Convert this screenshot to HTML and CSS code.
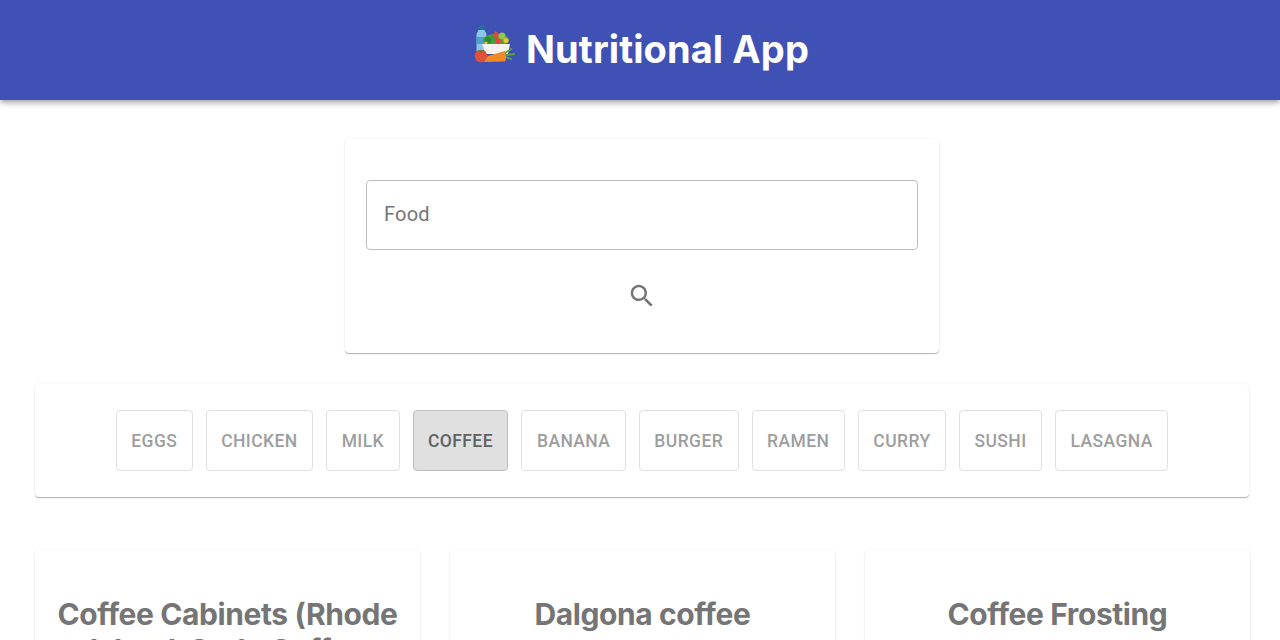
FILE: index.html
```html
<!DOCTYPE html>
<html lang="en">
<head>
    <meta charset="UTF-8">
    <meta name="viewport" content="width=device-width, initial-scale=1.0">
    <title>Nutritional App</title>
    <link rel="stylesheet" href="styles.css">
</head>
<body>
<header class="app-bar">
    <svg class="logo" width="42" height="38" viewBox="0 0 42 38" aria-hidden="true">
        <!-- bottle -->
        <rect x="4.5" y="0" width="6" height="5" rx="1" fill="#256f9e"/>
        <path d="M2.5 9 L4.5 5 H10.5 L12.5 9 V26 H2.5 Z" fill="#8cc6e6"/>
        <rect x="2.5" y="12" width="10" height="7" fill="#4d9fd0"/>
        <!-- salad -->
        <ellipse cx="22" cy="15" rx="13" ry="6" fill="#4da23c"/>
        <circle cx="14" cy="15" r="3.5" fill="#2f8a35"/>
        <circle cx="20" cy="12" r="3.5" fill="#3f9b3a"/>
        <path d="M19.5 9 L21.5 6 L25 9 L24 12 H20 Z" fill="#e2483d"/>
        <circle cx="28" cy="11" r="3.5" fill="#8cc84b"/>
        <circle cx="32" cy="15.5" r="2.5" fill="#f2c230"/>
        <circle cx="24" cy="16" r="3" fill="#e2483d"/>
        <circle cx="12" cy="18" r="1.5" fill="#f2c230"/>
        <!-- bowl -->
        <path d="M8 19 H36 L34 29 H12 Z" fill="#f5f3ee"/>
        <!-- tomato -->
        <circle cx="7" cy="31" r="6.3" fill="#e0503a"/>
        <path d="M3 25.5 H11 L7 27.5 Z" fill="#3c8f3a"/>
        <!-- carrot -->
        <path d="M10 37 L14 31 L31 26 Q33.5 31 31 36.5 Z" fill="#f08a24"/>
        <path d="M31 28 L38 23.5 M32.5 30 L41 29 M32 32 L38 34.5" stroke="#5aa63c" stroke-width="1.8" fill="none"/>
    </svg>
    <h1 class="app-title">Nutritional App</h1>
</header>

<main class="content">
    <section class="card search-card">
        <div class="food-field">Food</div>
        <button class="search-btn" aria-label="search">
            <svg width="30" height="30" viewBox="0 0 24 24" fill="#757575"><path d="M15.5 14h-.79l-.28-.27C15.41 12.59 16 11.11 16 9.5 16 5.91 13.09 3 9.5 3S3 5.91 3 9.5 5.91 16 9.5 16c1.61 0 3.09-.59 4.23-1.57l.27.28v.79l5 4.99L20.49 19l-4.99-5zm-6 0C7.01 14 5 11.99 5 9.5S7.01 5 9.5 5 14 7.01 14 9.5 11.99 14 9.5 14z"/></svg>
        </button>
    </section>

    <section class="card chips-card">
        <button class="chip">Eggs</button>
        <button class="chip">Chicken</button>
        <button class="chip">Milk</button>
        <button class="chip selected">Coffee</button>
        <button class="chip">Banana</button>
        <button class="chip">Burger</button>
        <button class="chip">Ramen</button>
        <button class="chip">Curry</button>
        <button class="chip">Sushi</button>
        <button class="chip">Lasagna</button>
    </section>

    <section class="results">
        <article class="card result-card"><h2>Coffee Cabinets (Rhode Island-Style Coffee Milkshakes)</h2></article>
        <article class="card result-card"><h2>Dalgona coffee</h2></article>
        <article class="card result-card"><h2>Coffee Frosting</h2></article>
    </section>
</main>
</body>
</html>
```

FILE: styles.css
```css
html, body {
    height: 640px;
    overflow: hidden;
}
body {
    margin: 0;
    background-color: #fff;
    font-family: Roboto, Arial, sans-serif;
}
.app-bar {
    box-sizing: border-box;
    height: 100px;
    padding-left: 3px;
    display: flex;
    align-items: center;
    justify-content: center;
    gap: 10px;
    background-color: #3f51b5;
    box-shadow: 0 2px 4px -1px rgba(0, 0, 0, 0.2), 0 4px 5px 0 rgba(0, 0, 0, 0.14), 0 1px 10px 0 rgba(0, 0, 0, 0.12);
}
.logo {
    margin-bottom: 12px;
}
.app-title {
    margin: 0 0 2px;
    color: #fff;
    font-family: Inter, sans-serif;
    font-size: 38px;
    font-weight: 700;
    letter-spacing: 0.1px;
}
.content {
    padding: 39px 31px 0 35px;
}
.card {
    background-color: #fff;
    border-radius: 4px;
    box-shadow: 0 1px 1px rgba(0, 0, 0, 0.3), 0 0 3px rgba(0, 0, 0, 0.06);
}
.search-card {
    box-sizing: border-box;
    width: 594px;
    height: 214px;
    margin: 0 auto 31px;
    padding: 41px 21px 0 21px;
}
.food-field {
    box-sizing: border-box;
    height: 70px;
    padding: 0 17px 2px;
    display: flex;
    align-items: center;
    border: 1px solid #bdbdbd;
    border-radius: 4px;
    color: #757575;
    font-size: 20px;
    letter-spacing: 0.2px;
}
.search-btn {
    display: block;
    margin: 31px auto 0;
    padding: 0;
    border: 0;
    background: none;
    width: 30px;
    height: 30px;
}
.chips-card {
    height: 113px;
    box-sizing: border-box;
    display: flex;
    justify-content: center;
    gap: 13px;
    padding-top: 26px;
    margin-bottom: 53px;
}
.chip {
    height: 61px;
    padding: 0 14.5px;
    border: 1px solid #e0e0e0;
    border-radius: 4px;
    background-color: #fff;
    color: #9e9e9e;
    font-family: Roboto, Arial, sans-serif;
    font-size: 17.5px;
    font-weight: 500;
    letter-spacing: 0.4px;
    text-transform: uppercase;
}
.chip.selected {
    background-color: #e0e0e0;
    border-color: #bdbdbd;
    color: #616161;
}
.results {
    display: grid;
    grid-template-columns: repeat(3, 385px);
    gap: 30px;
}
.result-card {
    box-sizing: border-box;
    height: 300px;
    padding: 46px 20px 0;
    text-align: center;
}
.result-card h2 {
    margin: 0;
    color: #757575;
    font-family: Inter, sans-serif;
    font-size: 30px;
    font-weight: 700;
    line-height: 36px;
    letter-spacing: -0.4px;
}
```
